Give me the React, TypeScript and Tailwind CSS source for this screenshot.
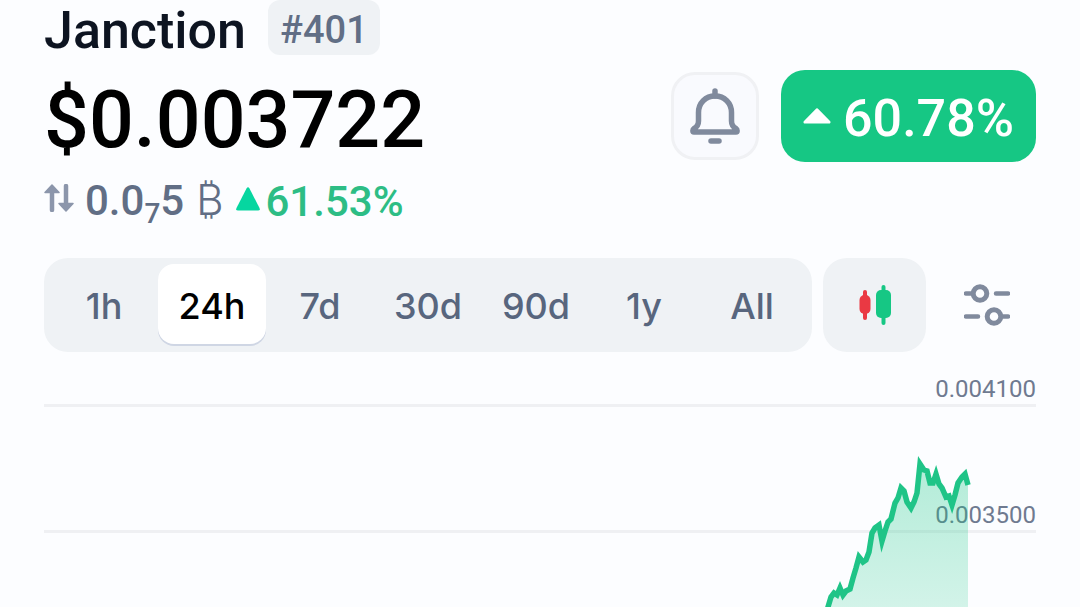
import React, { useState } from 'react';

const RANGES = ['1h', '24h', '7d', '30d', '90d', '1y', 'All'];
const GRID_LEVELS = ['0.004100', '0.003500'];

const CHART_WIDTH = 992;
const CHART_HEIGHT = 256;

const PRICE_POINTS = [
  [782, 262], [784, 255], [787, 245], [790, 241], [793, 243], [796, 236], [799, 243], [802, 239],
  [806, 237], [809, 226], [812, 216], [815, 205], [819, 210], [822, 208], [825, 200], [828, 181],
  [831, 176], [835, 173], [838, 189], [841, 179], [844, 170], [847, 167], [851, 151], [854, 146],
  [857, 136], [860, 139], [863, 150], [867, 156], [870, 150], [873, 141], [876, 112], [880, 118],
  [883, 119], [886, 131], [889, 131], [892, 122], [895, 132], [898, 136], [902, 145], [905, 144],
  [908, 153], [911, 143], [914, 131], [918, 125], [921, 122], [924, 133],
];

const BellIcon = () => (
  <svg className="h-14 w-[50px]" viewBox="0 0 50 56" fill="none" stroke="#808a9d" strokeWidth="5.500" strokeLinecap="round" strokeLinejoin="round">
    <path d="M25 3v5" />
    <path d="M25 8c-9.500 0-16.500 7-16.500 16.500V33c0 4-1.500 6-4.500 7.500-1.500 1-1.500 3.500 0 3.500h42c1.500 0 1.500-2.500 0-3.500-3-1.500-4.500-3.500-4.500-7.500v-8.500C41.500 15 34.500 8 25 8z" />
    <path d="M21 53h8" />
  </svg>
);

const SwapIcon = () => (
  <svg className="h-7 w-[30px]" viewBox="0 0 30 28" fill="#8c96ab" stroke="#8c96ab" strokeLinejoin="round" strokeLinecap="round">
    <path d="M8 8v18M22 2v18" strokeWidth="4.500" />
    <path d="M1 8.500 8 1l7 7.500zM15 19.500l7 7.500 7-7.500z" strokeWidth="1.500" />
  </svg>
);

const CandleIcon = () => (
  <svg className="h-10 w-8" viewBox="0 0 32 40" strokeLinecap="round">
    <path d="M6 7v26" stroke="#ea3943" strokeWidth="4" />
    <rect x="0.500" y="10" width="11" height="19" rx="5" fill="#ea3943" />
    <path d="M24.500 2v36" stroke="#16c784" strokeWidth="4" />
    <rect x="17" y="5" width="15" height="28" rx="5" fill="#16c784" />
  </svg>
);

const SlidersIcon = () => (
  <svg className="h-[42px] w-[46px]" viewBox="0 0 46 42" fill="none" stroke="#808a9d" strokeLinecap="round">
    <path d="M2 9.500h6M32 9.500h12M2 32.500h12M38 32.500h6" strokeWidth="4.500" />
    <circle cx="16" cy="9.500" r="6.800" strokeWidth="5" />
    <circle cx="30" cy="32.500" r="6.800" strokeWidth="5" />
  </svg>
);

const PriceChart = () => {
  const line = PRICE_POINTS.map(([x, y]) => `${x},${y}`).join(' ');

  return (
    <section className="relative h-64 overflow-hidden">
      {GRID_LEVELS.map((level, index) => (
        <div
          key={level}
          className={`flex items-end justify-end border-b-3 border-[#eff0f3] text-2xl leading-[30px] font-normal text-[#6f7a90] ${
            index === 0 ? 'h-[55px]' : 'h-[126px]'
          }`}
        >
          {level}
        </div>
      ))}
      {/* the plot covers the grid and its labels */}
      <svg className="absolute inset-0 h-full w-full" viewBox={`0 0 ${CHART_WIDTH} ${CHART_HEIGHT}`} preserveAspectRatio="none">
        <defs>
          <linearGradient id="area" gradientUnits="userSpaceOnUse" x1="0" y1="110" x2="0" y2="256">
            <stop offset="0" stopColor="#16c784" stopOpacity="0.320" />
            <stop offset="1" stopColor="#16c784" stopOpacity="0.180" />
          </linearGradient>
        </defs>
        <polygon points={`${line} 924,262`} fill="url(#area)" />
        <polyline points={line} fill="none" stroke="#1fc487" strokeWidth="5.500" strokeMiterlimit="6" />
      </svg>
    </section>
  );
};

export default function App() {
  const [range, setRange] = useState('24h');

  return (
    <main className="overflow-hidden bg-[#fcfdff] px-11 font-[Roboto,sans-serif] font-medium">
      <header className="flex h-[55px] items-center gap-[22px]">
        <h1 className="pt-[6px] text-[52px] leading-[52px] text-[#0d1421]">Janction</h1>
        <span className="flex h-full items-center rounded-xl bg-[#eff2f5] px-3 pt-[6px] text-[38px] text-[#616e85]">#401</span>
      </header>

      <div className="mt-[15px] flex items-center gap-[22px]">
        <p className="flex-1 pt-2 text-[79px] leading-[84px] text-black">$0.003722</p>
        <button aria-label="Price alert" className="flex h-[88px] w-[88px] items-center justify-center rounded-3xl border-3 border-[#f0f1f4] bg-[#f9fafe]">
          <BellIcon />
        </button>
        <div className="flex h-[92px] items-center gap-3 rounded-3xl bg-[#16c784] px-[22px] text-[52px] text-white">
          <svg className="h-4 w-7" viewBox="0 0 28 16" fill="white">
            <path d="M12.500 1.200a2 2 0 0 1 3 0L27 13c1 1 .5 2.500-1 2.500H2C.5 15.500 0 14 1 13z" />
          </svg>
          <span className="pt-[6px]">60.78%</span>
        </div>
      </div>

      <div className="mt-3 flex h-[54px] items-center text-[42px] text-[#616e85]">
        <div className="pb-[6px]">
          <SwapIcon />
        </div>
        <p className="ml-[11px] flex items-baseline leading-[54px]">
          <span>0.0</span>
          <sub className="top-2 text-[28px] leading-none">7</sub>
          <span>5</span>
          <span className="ml-3 font-[Inter,sans-serif] leading-none font-light">₿</span>
        </p>
        <div className="ml-3 pb-1">
          <svg className="h-6 w-6" viewBox="0 0 24 24" fill="#06d6a0">
            <path d="M10.500 1.500q1.500-2.500 3 0L23.500 21q1 2.500-1.500 2.500H2Q-.5 23.500.5 21z" />
          </svg>
        </div>
        <span className="ml-[6px] text-[#2dbd85]">61.53%</span>
      </div>

      <div className="mt-[30px] flex h-[94px] gap-[11px]">
        <div className="flex flex-1 rounded-3xl bg-[#eff2f5] px-[6px] pt-[6px] pb-2 font-[Inter,sans-serif] text-4xl">
          {RANGES.map((item) => (
            <button
              key={item}
              aria-pressed={item === range}
              onClick={() => setRange(item)}
              className={`flex-1 basis-0 rounded-2xl pt-1 ${
                item === range ? 'bg-white text-black shadow-[0_2px_0_#cfd6e4]' : 'text-[#58667e]'
              }`}
            >
              {item}
            </button>
          ))}
        </div>
        <button aria-label="Candlestick chart" className="flex w-[103px] items-center justify-center rounded-3xl bg-[#eff2f5]">
          <CandleIcon />
        </button>
        <button aria-label="Chart settings" className="flex w-[99px] items-center justify-center">
          <SlidersIcon />
        </button>
      </div>

      <PriceChart />
    </main>
  );
}
